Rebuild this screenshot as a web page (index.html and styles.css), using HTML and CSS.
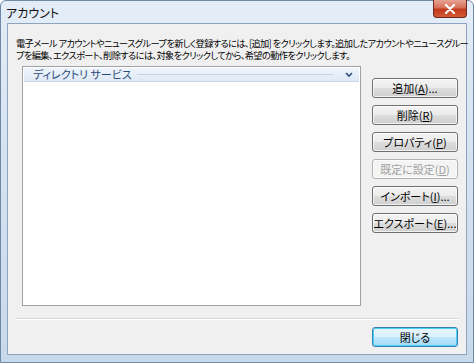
FILE: index.html
```html
<!DOCTYPE html>
<html lang="ja">
<head>
<meta charset="utf-8">
<link rel="stylesheet" href="styles.css">
</head>
<body>
<div class="window">
  <div class="titlebar">
    <span class="title">アカウント</span>
    <span class="close">
      <svg width="12" height="10" viewBox="0 0 12 10"><path d="M2 1 L10 9 M10 1 L2 9" stroke="#fff" stroke-width="2.2" stroke-linecap="round"/></svg>
    </span>
  </div>
  <div class="client">
    <div class="desc">
      <div class="line">電子メール アカウントやニュースグループを新しく登録するには、[追加] をクリックします。追加したアカウントやニュースグルー</div>
      <div class="line">プを編集、エクスポート、削除するには、対象をクリックしてから、希望の動作をクリックします。</div>
    </div>
    <div class="main">
      <div class="list">
        <div class="group">
          <span class="group-label">ディレクトリ&nbsp;サービス</span>
          <span class="group-rule"></span>
          <svg class="chev" width="8" height="6" viewBox="0 0 8 6"><path d="M1 1 L4 4 L7 1" stroke="#2d4f7c" stroke-width="1.6" fill="none"/></svg>
        </div>
      </div>
      <div class="buttons">
        <button class="btn">追加(<u>A</u>)...</button>
        <button class="btn">削除(<u>R</u>)</button>
        <button class="btn">プロパティ(<u>P</u>)</button>
        <button class="btn disabled">既定に設定(<u>D</u>)</button>
        <button class="btn">インポート(<u>I</u>)...</button>
        <button class="btn">エクスポート(<u>E</u>)...</button>
      </div>
    </div>
    <div class="sep"></div>
    <div class="footer">
      <button class="btn default">閉じる</button>
    </div>
  </div>
</div>
</body>
</html>
```

FILE: styles.css
```css
html, body {
  margin: 0;
  padding: 0;
}
body {
  width: 474px;
  height: 363px;
  overflow: hidden;
  font-family: "Noto Sans CJK JP", "Noto Sans", sans-serif;
  font-feature-settings: "palt";
}
.window {
  width: 474px;
  height: 363px;
  box-sizing: border-box;
  background: linear-gradient(180deg, #e4edf7 0%, #d6e3f1 40%, #c8d9ec 100%);
  border: 1px solid #6f8aa8;
  border-radius: 6px 6px 0 0;
  display: flex;
  flex-direction: column;
}
.titlebar {
  height: 22px;
  display: flex;
  justify-content: space-between;
  align-items: flex-start;
  padding-left: 5px;
}
.title {
  font-size: 12px;
  line-height: 22px;
  color: #111;
  margin-top: 1px;
}
.close {
  width: 34px;
  height: 18px;
  margin-right: 6px;
  margin-top: -1px;
  box-sizing: border-box;
  border: 1px solid #6b2a20;
  border-top: none;
  border-radius: 0 0 4px 4px;
  background: linear-gradient(180deg, #e8a493 0%, #d6705a 45%, #c23a1e 55%, #d25a36 100%);
  display: flex;
  align-items: center;
  justify-content: center;
}
.client {
  margin: 0 6px 0 6px;
  height: 332px;
  box-sizing: border-box;
  background: #f0f0f0;
  border: 1px solid #8ea4bc;
  display: flex;
  flex-direction: column;
  padding: 13px 8px 0 8px;
}
.desc {
  font-size: 9.2px;
  line-height: 12px;
  color: #000;
  white-space: nowrap;
  letter-spacing: -0.6px;
  margin-right: -6px;
}
.main {
  display: flex;
  margin-top: 5px;
  gap: 11px;
}
.list {
  margin-left: 6px;
  width: 339px;
  height: 240px;
  box-sizing: border-box;
  background: #fff;
  border: 1px solid #a0a0a0;
  padding: 1px;
}
.group {
  height: 13px;
  display: flex;
  align-items: center;
  background: linear-gradient(180deg, #eef4fb 0%, #dfe9f5 100%);
  border-bottom: 1px solid #c8d6e6;
  padding-left: 9px;
  padding-right: 6px;
}
.group-label {
  font-size: 11px;
  color: #2b4a78;
  line-height: 13px;
}
.group-rule {
  flex: 1;
  height: 1px;
  background: #c7d4e4;
  margin: 0 12px 0 5px;
}
.chev {
  display: block;
}
.buttons {
  display: flex;
  flex-direction: column;
  gap: 7px;
  margin-top: 12px;
}
.btn {
  width: 86px;
  height: 20px;
  box-sizing: border-box;
  border: 1px solid #707070;
  border-radius: 3px;
  background: linear-gradient(180deg, #f4f4f4 0%, #ebebeb 48%, #dddddd 52%, #cfcfcf 100%);
  font-family: "Noto Sans CJK JP", "Noto Sans", sans-serif;
  font-feature-settings: "palt";
  font-size: 11px;
  line-height: 16px;
  color: #000;
  padding: 0;
  box-shadow: inset 0 0 0 1px rgba(255,255,255,0.7);
}
.btn u {
  text-decoration: underline;
}
.btn.disabled {
  color: #a0a0a0;
  border-color: #adb2b5;
  background: #f4f4f4;
}
.sep {
  margin: 12px 0 0 0;
  height: 0;
  border-top: 1px solid #d5d5d5;
  border-bottom: 1px solid #ffffff;
}
.footer {
  display: flex;
  justify-content: flex-end;
  padding-top: 7px;
}
.btn.default {
  border-color: #3c7fb1;
  background: linear-gradient(180deg, #eaf6fd 0%, #d9f0fc 48%, #bee6fd 52%, #a7d9f5 100%);
  box-shadow: inset 0 0 0 1px #48d2f5;
}
```
